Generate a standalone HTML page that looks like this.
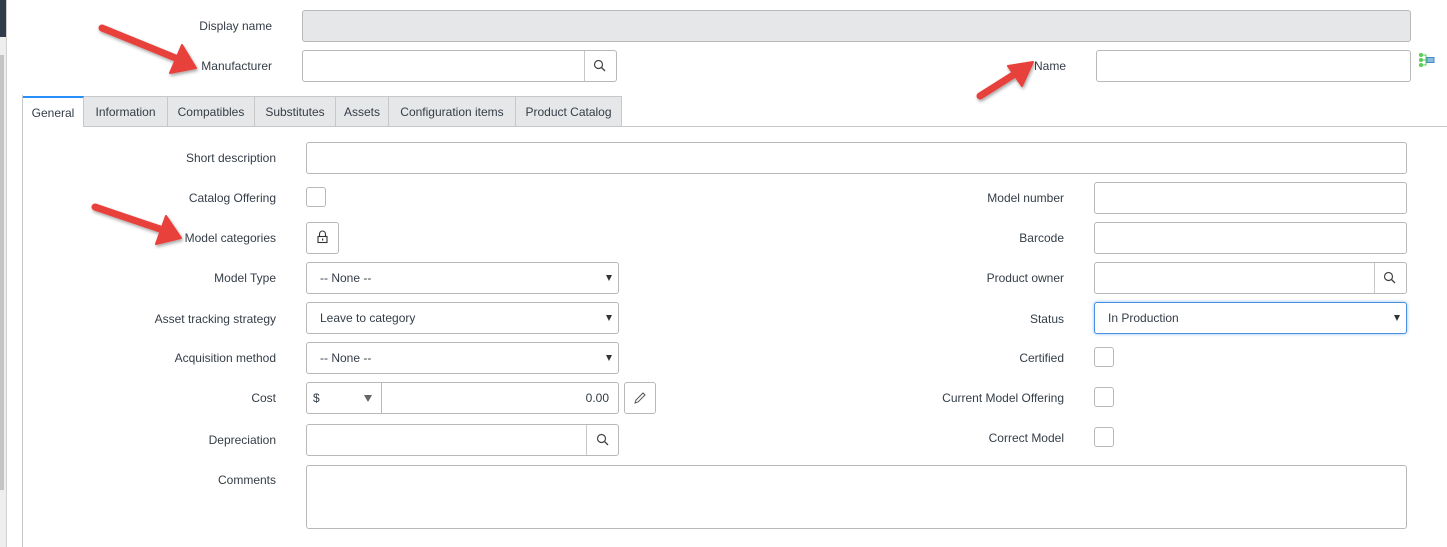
<!DOCTYPE html>
<html><head><meta charset="utf-8"><style>
*{box-sizing:border-box;margin:0;padding:0}
body{width:1447px;height:547px;position:relative;overflow:hidden;background:#fff;font-family:"Liberation Sans",sans-serif;font-size:12px;color:#343d47}
.a{position:absolute}
.l{position:absolute;text-align:right;width:260px;line-height:16px;margin-top:1px}
.in{position:absolute;border:1px solid #b8b8b8;border-radius:3px;background:#fff}
.sel{position:absolute;border:1px solid #b8b8b8;border-radius:3px;background:#fff;padding-left:13px;line-height:31px}
.sel:after{content:"";position:absolute;right:6px;top:12px;border-left:3.5px solid transparent;border-right:3.5px solid transparent;border-top:6px solid #333}
.cb{position:absolute;width:20px;height:20px;border:1px solid #b8b8b8;border-radius:3px;background:#fff}
.tab{position:absolute;top:96px;height:31px;border:1px solid #c8c8c8;border-left:none;background:#e6e7e8;line-height:31px;text-align:center;color:#343d47}
</style></head><body>
<div class="a" style="left:0;top:0;width:6px;height:37px;background:#2f3d4b"></div>
<div class="a" style="left:0;top:37px;width:6px;height:510px;background:#eee"></div>
<div class="a" style="left:0;top:55px;width:4px;height:435px;background:#c4c4c4"></div>
<div class="a" style="left:6px;top:0;width:1px;height:547px;background:#d0d0d0"></div>

<div class="l" style="left:12px;top:17px">Display name</div>
<div class="in" style="left:302px;top:10px;width:1109px;height:32px;background:#e6e7e8"></div>
<div class="l" style="left:12px;top:57px">Manufacturer</div>
<div class="in" style="left:302px;top:50px;width:315px;height:32px"></div>
<div class="a" style="left:584px;top:51px;width:1px;height:30px;background:#c8c8c8"></div>
<svg class="a" style="left:593px;top:59px" width="14" height="14"><circle cx="5.5" cy="5.5" r="4" fill="none" stroke="#444" stroke-width="1.2"/><line x1="8.5" y1="8.5" x2="12" y2="12" stroke="#444" stroke-width="1.3"/></svg>
<div class="l" style="left:806px;top:57px">Name</div>
<div class="in" style="left:1096px;top:50px;width:315px;height:32px"></div>
<svg class="a" style="left:1418px;top:52px" width="18" height="16"><circle cx="3" cy="3" r="2" fill="#5c5" /><circle cx="3" cy="8" r="2" fill="#5c5"/><circle cx="3" cy="13" r="2" fill="#5c5"/><path d="M5 3H8V13H5M5 8H9" stroke="#5c5" fill="none"/><rect x="9" y="5.5" width="7" height="5" fill="#8bd" stroke="#48c"/></svg>

<div class="a" style="left:22px;top:95px;width:1px;height:452px;background:#c8c8c8"></div>
<div class="a" style="left:622px;top:126px;width:825px;height:1px;background:#c8c8c8"></div>
<div class="tab" style="left:23px;width:61px;background:#fff;border-top:2px solid #278efc;border-bottom:none;border-right:1px solid #c8c8c8">General</div>
<div class="tab" style="left:84px;width:84px">Information</div>
<div class="tab" style="left:168px;width:87px">Compatibles</div>
<div class="tab" style="left:255px;width:81px">Substitutes</div>
<div class="tab" style="left:336px;width:53px">Assets</div>
<div class="tab" style="left:389px;width:127px">Configuration items</div>
<div class="tab" style="left:516px;width:106px">Product Catalog</div>

<div class="l" style="left:16px;top:149px">Short description</div>
<div class="in" style="left:306px;top:142px;width:1101px;height:32px"></div>
<div class="l" style="left:16px;top:189px">Catalog Offering</div>
<div class="cb" style="left:306px;top:187px"></div>
<div class="l" style="left:16px;top:229px">Model categories</div>
<div class="in" style="left:306px;top:222px;width:33px;height:32px"></div>
<svg class="a" style="left:316px;top:230px" width="13" height="14"><path d="M3.5 6V4a3 3 0 0 1 6 0v2" fill="none" stroke="#333" stroke-width="1.1"/><rect x="2" y="6.5" width="9" height="6" fill="none" stroke="#333" stroke-width="1.1"/><rect x="6" y="8.5" width="1.2" height="2" fill="#333"/></svg>
<div class="l" style="left:16px;top:269px">Model Type</div>
<div class="sel" style="left:306px;top:262px;width:313px;height:32px">-- None --</div>
<div class="l" style="left:16px;top:310px">Asset tracking strategy</div>
<div class="sel" style="left:306px;top:302px;width:313px;height:32px">Leave to category</div>
<div class="l" style="left:16px;top:349px">Acquisition method</div>
<div class="sel" style="left:306px;top:342px;width:313px;height:32px">-- None --</div>
<div class="l" style="left:16px;top:389px">Cost</div>
<div class="in" style="left:306px;top:382px;width:76px;height:32px;border-radius:3px 0 0 3px;padding-left:6px;line-height:31px">$</div>
<div class="a" style="left:364px;top:395px;border-left:4px solid transparent;border-right:4px solid transparent;border-top:7px solid #666"></div>
<div class="in" style="left:381px;top:382px;width:238px;height:32px;border-radius:0 3px 3px 0;text-align:right;padding-right:9px;line-height:31px">0.00</div>
<div class="in" style="left:624px;top:382px;width:32px;height:32px"></div>
<svg class="a" style="left:633px;top:391px" width="14" height="14"><path d="M2 12L3 9L10 2L12 4L5 11Z" fill="none" stroke="#555" stroke-width="1"/></svg>
<div class="l" style="left:16px;top:431px">Depreciation</div>
<div class="in" style="left:306px;top:424px;width:313px;height:32px"></div>
<div class="a" style="left:586px;top:425px;width:1px;height:30px;background:#c8c8c8"></div>
<svg class="a" style="left:596px;top:433px" width="14" height="14"><circle cx="5.5" cy="5.5" r="4" fill="none" stroke="#444" stroke-width="1.2"/><line x1="8.5" y1="8.5" x2="12" y2="12" stroke="#444" stroke-width="1.3"/></svg>
<div class="l" style="left:16px;top:471px">Comments</div>
<div class="in" style="left:306px;top:465px;width:1101px;height:64px"></div>

<div class="l" style="left:804px;top:189px">Model number</div>
<div class="in" style="left:1094px;top:182px;width:313px;height:32px"></div>
<div class="l" style="left:804px;top:229px">Barcode</div>
<div class="in" style="left:1094px;top:222px;width:313px;height:32px"></div>
<div class="l" style="left:804px;top:269px">Product owner</div>
<div class="in" style="left:1094px;top:262px;width:313px;height:32px"></div>
<div class="a" style="left:1374px;top:263px;width:1px;height:30px;background:#c8c8c8"></div>
<svg class="a" style="left:1383px;top:271px" width="14" height="14"><circle cx="5.5" cy="5.5" r="4" fill="none" stroke="#444" stroke-width="1.2"/><line x1="8.5" y1="8.5" x2="12" y2="12" stroke="#444" stroke-width="1.3"/></svg>
<div class="l" style="left:804px;top:310px">Status</div>
<div class="sel" style="left:1094px;top:302px;width:313px;height:32px;border-color:#4a90e2;box-shadow:0 0 3px #8bbcf0">In Production</div>
<div class="l" style="left:804px;top:349px">Certified</div>
<div class="cb" style="left:1094px;top:347px"></div>
<div class="l" style="left:804px;top:389px">Current Model Offering</div>
<div class="cb" style="left:1094px;top:387px"></div>
<div class="l" style="left:804px;top:429px">Correct Model</div>
<div class="cb" style="left:1094px;top:427px"></div>

<svg class="a" style="left:0;top:0" width="1447" height="547">
<defs><filter id="s"><feDropShadow dx="1" dy="2" stdDeviation="1.5" flood-opacity="0.35"/></filter></defs>
<g fill="#e8403a" stroke="#e8403a" stroke-linecap="round" filter="url(#s)">
<line x1="102" y1="28" x2="178" y2="59" stroke-width="7"/>
<polygon points="196,68 170,73 182,45" stroke-width="2" stroke-linejoin="round"/>
<line x1="980" y1="96" x2="1018" y2="72" stroke-width="7"/>
<polygon points="1033,62 1022,86 1008,66" stroke-width="2" stroke-linejoin="round"/>
<line x1="95" y1="207" x2="163" y2="230" stroke-width="7"/>
<polygon points="181,238 156,244 166,216" stroke-width="2" stroke-linejoin="round"/>
</g></svg>
</body></html>
